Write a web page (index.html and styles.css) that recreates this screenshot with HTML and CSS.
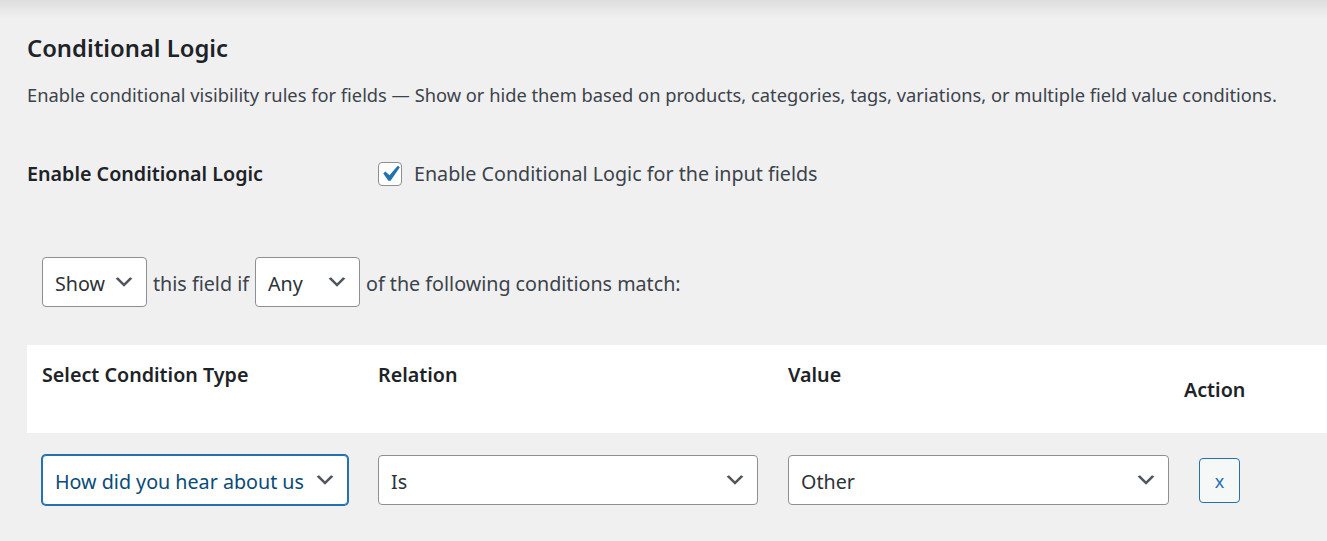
FILE: index.html
```html
<!DOCTYPE html>
<html lang="en">
<head>
<meta charset="utf-8">
<title>Conditional Logic</title>
<link rel="stylesheet" href="styles.css">
</head>
<body>
<div class="topshade"></div>
<main class="wrap">
  <h2 class="title">Conditional Logic</h2>
  <p class="desc">Enable conditional visibility rules for fields — Show or hide them based on products, categories, tags, variations, or multiple field value conditions.</p>

  <div class="form-row">
    <div class="form-label">Enable Conditional Logic</div>
    <label class="check-wrap">
      <span class="checkbox">
        <svg viewBox="0 0 20 20"><path d="M14.83 4.89l1.34.94-5.81 8.38H9.02L5.78 9.67l1.34-1.250 2.57 2.4z" fill="#2271b1"/></svg>
      </span>
      <span class="check-text">Enable Conditional Logic for the input fields</span>
    </label>
  </div>

  <div class="cond-row">
    <div class="sel sel-small"><span class="sel-text">Show</span><svg class="chev" viewBox="0 0 20 20"><path d="M5 6l5 5 5-5 2 1-7 7-7-7 2-1z" fill="#50575e"/></svg></div>
    <span class="inline-text">this field if</span>
    <div class="sel sel-small"><span class="sel-text">Any</span><svg class="chev" viewBox="0 0 20 20"><path d="M5 6l5 5 5-5 2 1-7 7-7-7 2-1z" fill="#50575e"/></svg></div>
    <span class="inline-text">of the following conditions match:</span>
  </div>

  <div class="ctable">
    <div class="thead">
      <div class="th c1">Select Condition Type</div>
      <div class="th c2">Relation</div>
      <div class="th c3">Value</div>
      <div class="th c4 th-mid">Action</div>
    </div>
    <div class="trow">
      <div class="td c1"><div class="sel sel-wide sel-focus"><span class="sel-text">How did you hear about us</span><svg class="chev" viewBox="0 0 20 20"><path d="M5 6l5 5 5-5 2 1-7 7-7-7 2-1z" fill="#50575e"/></svg></div></div>
      <div class="td c2"><div class="sel sel-wide"><span class="sel-text">Is</span><svg class="chev" viewBox="0 0 20 20"><path d="M5 6l5 5 5-5 2 1-7 7-7-7 2-1z" fill="#50575e"/></svg></div></div>
      <div class="td c3"><div class="sel sel-wide"><span class="sel-text">Other</span><svg class="chev" viewBox="0 0 20 20"><path d="M5 6l5 5 5-5 2 1-7 7-7-7 2-1z" fill="#50575e"/></svg></div></div>
      <div class="td c4"><button class="xbtn" type="button">x</button></div>
    </div>
  </div>
</main>
</body>
</html>
```
FILE: styles.css
```css
* { box-sizing: border-box; }
html, body { margin: 0; padding: 0; }
body {
  background: #f0f0f1;
  font-family: "Noto Sans", "Open Sans", sans-serif;
  color: #3c434a;
  font-size: 18.3px;
  width: 1327px;
  height: 541px;
  overflow: hidden;
  position: relative;
}
.topshade {
  position: absolute;
  top: 0; left: 0; right: 0;
  height: 18px;
  background: linear-gradient(#dedede, rgba(240,240,241,0));
}
.wrap { padding-left: 27px; }
.title {
  margin: 33px 0 0;
  font-size: 23.8px;
  line-height: 30px;
  font-weight: 600;
  color: #1d2327;
}
.desc {
  margin: 19px 0 0;
  line-height: 26px;
  font-size: 18.3px;
  color: #3c434a;
  white-space: nowrap;
}
.form-row {
  display: flex;
  align-items: center;
  height: 24px;
  margin-top: 54px;
}
.form-label {
  width: 351px;
  font-size: 19.7px;
  font-weight: 600;
  color: #1d2327;
  margin-top: -2px;
}
.check-wrap { display: flex; align-items: center; gap: 12px; }
.checkbox {
  width: 24px; height: 24px;
  border: 1px solid #8c8f94;
  border-radius: 4px;
  background: #fff;
  display: flex; align-items: center; justify-content: center;
  overflow: visible;
}
.checkbox svg { width: 32px; height: 32px; flex: none; margin-top: -1px; }
.check-text { font-size: 19.7px; color: #3c434a; margin-top: -1px; }
.cond-row {
  display: flex;
  align-items: center;
  gap: 6px;
  margin-top: 71px;
  padding-left: 15px;
  height: 50px;
}
.inline-text { font-size: 19.7px; color: #3c434a; padding-top: 2px; }
.sel {
  display: flex;
  align-items: center;
  justify-content: space-between;
  height: 50px;
  background: #fff;
  border: 1px solid #8c8f94;
  border-radius: 4px;
  padding: 0 10px 0 12px;
  color: #2c3338;
  font-size: 19.7px;
}
.sel-text { padding-top: 2px; }
.sel-small { width: 105px; }
.chev { width: 24px; height: 24px; flex: none; }
.ctable { margin-top: 38px; }
.thead {
  display: grid;
  grid-template-columns: 336px 410px 411px 1fr;
  background: #fff;
  height: 88px;
}
.th {
  padding: 16px 0 0 15px;
  font-size: 19.7px;
  font-weight: 600;
  line-height: 28px;
  color: #1d2327;
}
.th.c4 { padding-left: 0; }
.th-mid { align-self: center; padding-top: 2px; }
.trow {
  display: grid;
  grid-template-columns: 336px 410px 411px 1fr;
  padding-top: 22px;
}
.td { padding: 0 15px; }
.sel-wide { width: 100%; }
.sel-focus {
  border-color: #2271b1;
  box-shadow: 0 0 0 1px #2271b1;
  color: #0a4b78;
}
.td.c4 { padding-left: 15px; padding-top: 3px; }
.xbtn {
  width: 41px; height: 45px;
  border: 1px solid #2271b1;
  border-radius: 4px;
  background: #f6f7f7;
  color: #2271b1;
  font-family: "Noto Sans", sans-serif;
  font-size: 18px;
  padding: 0;
}
```
